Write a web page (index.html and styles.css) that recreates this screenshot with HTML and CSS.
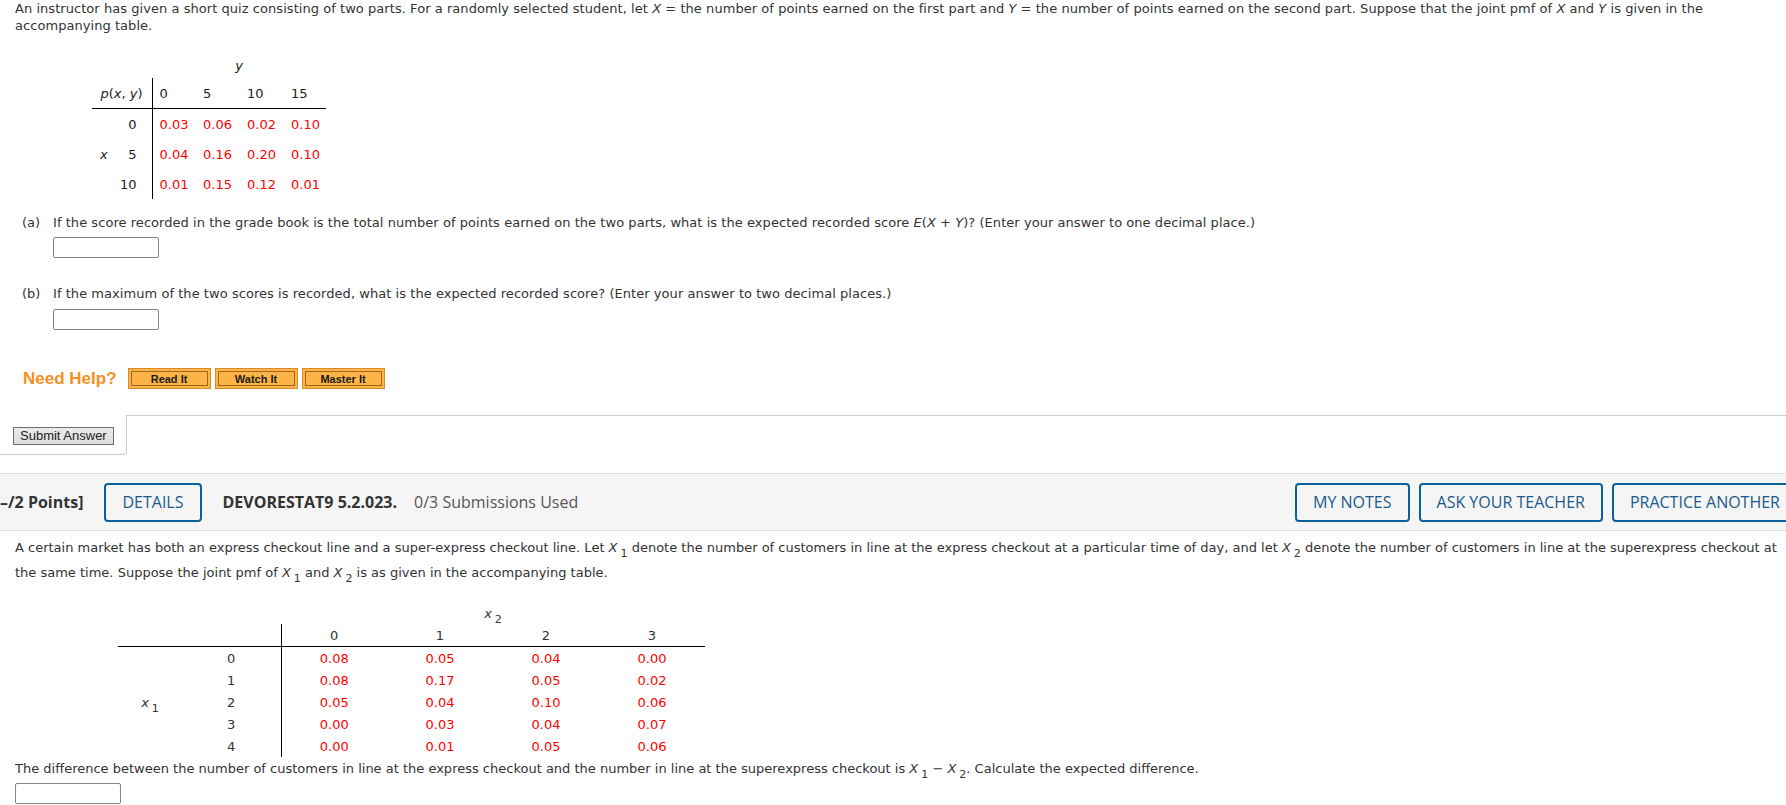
FILE: index.html
```html
<!DOCTYPE html>
<html>
<head>
<meta charset="utf-8">
<title>Quiz</title>
<link rel="stylesheet" href="styles.css">
</head>
<body>
<div class="q1">
  <p class="intro">An instructor has given a short quiz consisting of two parts. For a randomly selected student, let <i>X</i> = the number of points earned on the first part and <i>Y</i> = the number of points earned on the second part. Suppose that the joint pmf of <i>X</i> and <i>Y</i> is given in the<br>accompanying table.</p>

  <table class="t1">
    <colgroup><col class="ca"><col class="cb"><col class="cd"><col class="cd"><col class="cd"><col class="ce"></colgroup>
    <tr class="axis"><td></td><td></td><td colspan="4"><i>y</i></td></tr>
    <tr class="head"><td colspan="2" class="pxy"><i>p</i>(<i>x</i>, <i>y</i>)</td><td class="sep">0</td><td>5</td><td>10</td><td>15</td></tr>
    <tr><td></td><td class="rl">0</td><td class="sep v">0.03</td><td class="v">0.06</td><td class="v">0.02</td><td class="v">0.10</td></tr>
    <tr><td class="xl"><i>x</i></td><td class="rl">5</td><td class="sep v">0.04</td><td class="v">0.16</td><td class="v">0.20</td><td class="v">0.10</td></tr>
    <tr><td></td><td class="rl">10</td><td class="sep v">0.01</td><td class="v">0.15</td><td class="v">0.12</td><td class="v">0.01</td></tr>
  </table>

  <div class="part part-a">
    <span class="plabel">(a)</span>
    <div class="pbody">
      <div class="ptext">If the score recorded in the grade book is the total number of points earned on the two parts, what is the expected recorded score <i>E</i>(<i>X</i> + <i>Y</i>)? (Enter your answer to one decimal place.)</div>
      <input type="text" class="ans">
    </div>
  </div>

  <div class="part part-b">
    <span class="plabel">(b)</span>
    <div class="pbody">
      <div class="ptext">If the maximum of the two scores is recorded, what is the expected recorded score? (Enter your answer to two decimal places.)</div>
      <input type="text" class="ans">
    </div>
  </div>

  <div class="help">
    <span class="need">Need Help?</span>
    <button class="hbtn">Read It</button>
    <button class="hbtn">Watch It</button>
    <button class="hbtn">Master It</button>
  </div>
</div>

<div class="submit-row">
  <div class="submit-cell"><button class="submit">Submit Answer</button></div>
  <div class="submit-rest"></div>
</div>

<div class="bar">
  <span class="pts">–/2 Points]</span>
  <button class="bbtn details">DETAILS</button>
  <span class="code">DEVORESTAT9 5.2.023.</span>
  <span class="subs">0/3 Submissions Used</span>
  <div class="actions">
    <button class="bbtn">MY NOTES</button>
    <button class="bbtn">ASK YOUR TEACHER</button>
    <button class="bbtn">PRACTICE ANOTHER</button>
  </div>
</div>

<div class="q2">
  <p class="intro2">A certain market has both an express checkout line and a super-express checkout line. Let <i>X</i><span class="sub">1</span> denote the number of customers in line at the express checkout at a particular time of day, and let <i>X</i><span class="sub">2</span> denote the number of customers in line at the superexpress checkout at<br>the same time. Suppose the joint pmf of <i>X</i><span class="sub">1</span> and <i>X</i><span class="sub">2</span> is as given in the accompanying table.</p>

  <table class="t2">
    <colgroup><col class="c1"><col class="c2"><col class="cv"><col class="cv"><col class="cv"><col class="cv"></colgroup>
    <tr class="axis"><td></td><td></td><td colspan="4"><i>x</i><span class="sub">2</span></td></tr>
    <tr class="head"><td></td><td></td><td class="sep">0</td><td>1</td><td>2</td><td>3</td></tr>
    <tr><td></td><td>0</td><td class="sep v">0.08</td><td class="v">0.05</td><td class="v">0.04</td><td class="v">0.00</td></tr>
    <tr><td></td><td>1</td><td class="sep v">0.08</td><td class="v">0.17</td><td class="v">0.05</td><td class="v">0.02</td></tr>
    <tr><td><i>x</i><span class="sub">1</span></td><td>2</td><td class="sep v">0.05</td><td class="v">0.04</td><td class="v">0.10</td><td class="v">0.06</td></tr>
    <tr><td></td><td>3</td><td class="sep v">0.00</td><td class="v">0.03</td><td class="v">0.04</td><td class="v">0.07</td></tr>
    <tr><td></td><td>4</td><td class="sep v">0.00</td><td class="v">0.01</td><td class="v">0.05</td><td class="v">0.06</td></tr>
  </table>

  <p class="diff">The difference between the number of customers in line at the express checkout and the number in line at the superexpress checkout is <i>X</i><span class="sub">1</span> − <i>X</i><span class="sub">2</span>. Calculate the expected difference.</p>
  <input type="text" class="ans ans-c">
</div>
</body>
</html>
```

FILE: styles.css
```css
html, body {
  margin: 0;
  padding: 0;
  background: #fff;
  overflow: hidden;
}

body {
  font-family: "DejaVu Sans", Verdana, sans-serif;
  font-size: 13px;
  color: #333;
}

i { font-style: italic; }

.sub {
  font-size: 11px;
  vertical-align: -5px;
  line-height: 0;
  margin-left: 3px;
}

/* ---------- Question 1 ---------- */
.q1 {
  padding-left: 15px;
}

.intro {
  margin: 0;
  line-height: 17px;
  white-space: nowrap;
  letter-spacing: 0.05px;
}

.t1 {
  border-collapse: collapse;
  table-layout: fixed;
  margin: 18px 0 0 77px;
  color: #222;
}
.t1 col.ca { width: 28px; }
.t1 col.cb { width: 32px; }
.t1 col.cd { width: 44px; }
.t1 col.ce { width: 42px; }

.t1 td {
  padding: 0 0 0 7px;
  height: 30px;
  text-align: left;
  white-space: nowrap;
}
.t1 .axis td {
  height: 26px;
  padding: 0;
  text-align: center;
}
.t1 .head td {
  border-bottom: 1px solid #000;
}
.t1 .pxy {
  text-align: right;
  padding: 0 9px 0 0;
}
.t1 .rl {
  text-align: right;
  padding: 0 15px 0 0;
}
.t1 .xl {
  padding-left: 8px;
}
.sep {
  border-left: 1px solid #000;
}
.v {
  color: #f00;
}

.part {
  display: flex;
  margin-left: 7px;
}
.part-a { margin-top: 15px; }
.part-b { margin-top: 27px; }

.plabel {
  width: 31px;
  line-height: 17px;
  flex: none;
}
.ptext {
  line-height: 17px;
  white-space: nowrap;
  letter-spacing: 0.05px;
}

.ans {
  display: block;
  width: 106px;
  height: 21px;
  box-sizing: border-box;
  margin: 6px 0 0 0;
  padding: 0 3px;
  border: 1px solid #858585;
  border-radius: 2px;
  background: #fff;
}
.part-b .ans { margin-top: 7px; }

.help {
  display: flex;
  align-items: center;
  gap: 4px;
  margin: 38px 0 0 8px;
  height: 21px;
}
.need {
  font-family: "Liberation Sans", Arial, sans-serif;
  font-weight: bold;
  font-size: 17px;
  color: #f5901e;
  margin-right: 7px;
}
.hbtn {
  width: 83px;
  height: 21px;
  box-sizing: border-box;
  padding: 0;
  border: 1px solid #dd8a2e;
  background: #fbb445;
  box-shadow: inset 0 0 0 2px #fbb445, inset 0 0 0 3px #a0651f;
  font-family: "Liberation Sans", Arial, sans-serif;
  font-weight: bold;
  font-size: 11px;
  color: #1a1a1a;
}

/* ---------- Submit ---------- */
.submit-row {
  display: flex;
  height: 40px;
  margin-top: 26px;
}
.submit-cell {
  width: 127px;
  box-sizing: border-box;
  border-right: 1px solid #ccc;
  border-bottom: 1px solid #ccc;
  border-bottom-right-radius: 4px;
  padding: 12px 0 0 13px;
}
.submit-rest {
  flex: 1;
  border-top: 1px solid #ccc;
}
.submit {
  height: 18px;
  padding: 0 6px;
  border: 1px solid #6e6e6e;
  background: linear-gradient(#ececec, #dcdcdc);
  font-family: "Liberation Sans", Arial, sans-serif;
  font-size: 13px;
  line-height: 16px;
  color: #222;
}

/* ---------- Header bar ---------- */
.bar {
  display: flex;
  align-items: center;
  width: 1810px;
  height: 58px;
  box-sizing: border-box;
  margin-top: 18px;
  padding-right: 8px;
  background: #f5f5f5;
  border-top: 1px solid #ddd;
  border-bottom: 1px solid #ddd;
  font-family: "Open Sans", "Noto Sans", sans-serif;
  font-size: 16px;
  color: #333;
  white-space: nowrap;
}
.pts {
  font-weight: bold;
}
.bbtn {
  height: 39px;
  box-sizing: border-box;
  padding: 0 16px;
  border: 2px solid #0b6199;
  border-radius: 4px;
  background: transparent;
  font-family: "Open Sans", "Noto Sans", sans-serif;
  font-size: 16px;
  color: #1b5a8c;
}
.bbtn:last-child {
  padding-right: 20px;
}
.details {
  margin-left: 21px;
}
.code {
  margin-left: 21px;
  font-weight: bold;
}
.subs {
  margin-left: 17px;
  color: #555;
}
.actions {
  display: flex;
  gap: 9px;
  margin-left: auto;
}

/* ---------- Question 2 ---------- */
.intro2 {
  margin: 4px 0 0 15px;
  line-height: 25px;
  white-space: nowrap;
}

.t2 {
  border-collapse: collapse;
  table-layout: fixed;
  margin: 17px 0 0 118px;
}
.t2 col.c1 { width: 64px; }
.t2 col.c2 { width: 99px; }
.t2 col.cv { width: 106px; }
.t2 td {
  height: 22px;
  padding: 0;
  text-align: center;
  white-space: nowrap;
}
.t2 .head td {
  border-bottom: 1px solid #000;
}

.diff {
  margin: 0 0 0 15px;
  line-height: 24px;
  white-space: nowrap;
}
.ans-c {
  margin: 2px 0 0 15px;
}
```
